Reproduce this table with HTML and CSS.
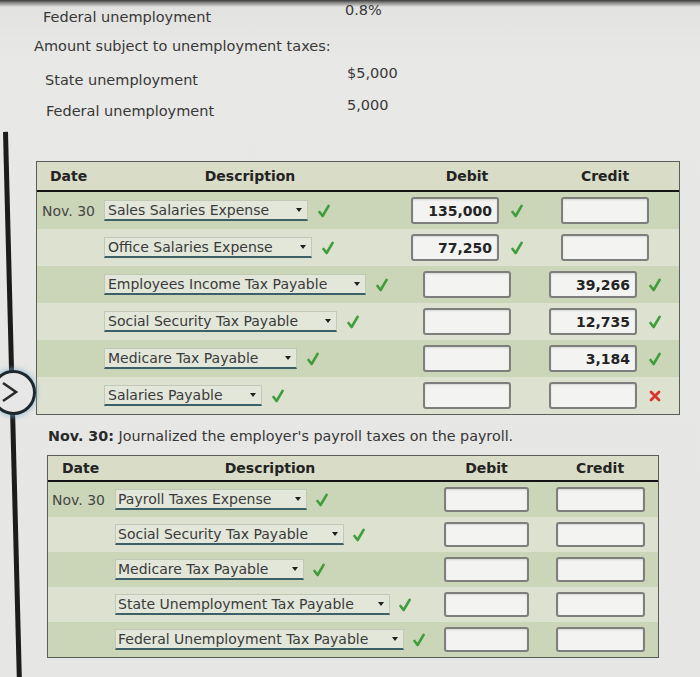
FILE: index.html
```html
<!DOCTYPE html>
<html>
<head>
<meta charset="utf-8">
<title>Payroll journal</title>
<link rel="stylesheet" href="styles.css">
</head>
<body>
<div class="edge"></div>
<div class="nav-circle"></div>
<svg class="nav-chevron" width="18" height="22" viewBox="0 0 18 22"><polyline points="2,2 15,11 2,20" fill="none" stroke="#2b2b2b" stroke-width="2.6" stroke-linejoin="miter"/></svg>

<main class="page">
  <section class="rates">
    <div class="rate-row r1"><span class="label">Federal unemployment</span><span class="val">0.8%</span></div>
    <div class="rate-row r2"><span class="head">Amount subject to unemployment taxes:</span></div>
    <div class="rate-row r3"><span class="label">State unemployment</span><span class="val">$5,000</span></div>
    <div class="rate-row r4"><span class="label">Federal unemployment</span><span class="val">5,000</span></div>
  </section>

  <div class="journal j1">
    <div class="jhead">
      <span class="h-date">Date</span><span class="h-c">Description</span><span class="h-c">Debit</span><span class="h-c">Credit</span>
    </div>
    <div class="jrow dark">
      <span class="date">Nov. 30</span>
      <span class="desc"><span class="sel">Sales Salaries Expense<i class="caret"></i></span><svg class="ok" viewBox="0 0 12 14"><path d="M1.5 8 L4.6 12 L10.6 1.8"/></svg></span>
      <span class="amt"><span class="inp">135,000</span><svg class="ok" viewBox="0 0 12 14"><path d="M1.5 8 L4.6 12 L10.6 1.8"/></svg></span>
      <span class="amt"><span class="inp"></span></span>
    </div>
    <div class="jrow light">
      <span class="date"></span>
      <span class="desc"><span class="sel">Office Salaries Expense<i class="caret"></i></span><svg class="ok" viewBox="0 0 12 14"><path d="M1.5 8 L4.6 12 L10.6 1.8"/></svg></span>
      <span class="amt"><span class="inp">77,250</span><svg class="ok" viewBox="0 0 12 14"><path d="M1.5 8 L4.6 12 L10.6 1.8"/></svg></span>
      <span class="amt"><span class="inp"></span></span>
    </div>
    <div class="jrow dark">
      <span class="date"></span>
      <span class="desc"><span class="sel">Employees Income Tax Payable<i class="caret"></i></span><svg class="ok" viewBox="0 0 12 14"><path d="M1.5 8 L4.6 12 L10.6 1.8"/></svg></span>
      <span class="amt"><span class="inp"></span></span>
      <span class="amt"><span class="inp">39,266</span><svg class="ok" viewBox="0 0 12 14"><path d="M1.5 8 L4.6 12 L10.6 1.8"/></svg></span>
    </div>
    <div class="jrow light">
      <span class="date"></span>
      <span class="desc"><span class="sel">Social Security Tax Payable<i class="caret"></i></span><svg class="ok" viewBox="0 0 12 14"><path d="M1.5 8 L4.6 12 L10.6 1.8"/></svg></span>
      <span class="amt"><span class="inp"></span></span>
      <span class="amt"><span class="inp">12,735</span><svg class="ok" viewBox="0 0 12 14"><path d="M1.5 8 L4.6 12 L10.6 1.8"/></svg></span>
    </div>
    <div class="jrow dark">
      <span class="date"></span>
      <span class="desc"><span class="sel">Medicare Tax Payable<i class="caret"></i></span><svg class="ok" viewBox="0 0 12 14"><path d="M1.5 8 L4.6 12 L10.6 1.8"/></svg></span>
      <span class="amt"><span class="inp"></span></span>
      <span class="amt"><span class="inp">3,184</span><svg class="ok" viewBox="0 0 12 14"><path d="M1.5 8 L4.6 12 L10.6 1.8"/></svg></span>
    </div>
    <div class="jrow light">
      <span class="date"></span>
      <span class="desc"><span class="sel">Salaries Payable<i class="caret"></i></span><svg class="ok" viewBox="0 0 12 14"><path d="M1.5 8 L4.6 12 L10.6 1.8"/></svg></span>
      <span class="amt"><span class="inp"></span></span>
      <span class="amt"><span class="inp"></span><svg class="bad" viewBox="0 0 12 12"><path d="M2 2 L10 10 M10 2 L2 10"/></svg></span>
    </div>
  </div>

  <p class="caption"><b>Nov. 30:</b> Journalized the employer's payroll taxes on the payroll.</p>

  <div class="journal j2">
    <div class="jhead">
      <span class="h-date">Date</span><span class="h-c">Description</span><span class="h-c">Debit</span><span class="h-c">Credit</span>
    </div>
    <div class="jrow dark">
      <span class="date">Nov. 30</span>
      <span class="desc"><span class="sel">Payroll Taxes Expense<i class="caret"></i></span><svg class="ok" viewBox="0 0 12 14"><path d="M1.5 8 L4.6 12 L10.6 1.8"/></svg></span>
      <span class="amt"><span class="inp"></span></span>
      <span class="amt"><span class="inp"></span></span>
    </div>
    <div class="jrow light">
      <span class="date"></span>
      <span class="desc"><span class="sel">Social Security Tax Payable<i class="caret"></i></span><svg class="ok" viewBox="0 0 12 14"><path d="M1.5 8 L4.6 12 L10.6 1.8"/></svg></span>
      <span class="amt"><span class="inp"></span></span>
      <span class="amt"><span class="inp"></span></span>
    </div>
    <div class="jrow dark">
      <span class="date"></span>
      <span class="desc"><span class="sel">Medicare Tax Payable<i class="caret"></i></span><svg class="ok" viewBox="0 0 12 14"><path d="M1.5 8 L4.6 12 L10.6 1.8"/></svg></span>
      <span class="amt"><span class="inp"></span></span>
      <span class="amt"><span class="inp"></span></span>
    </div>
    <div class="jrow light">
      <span class="date"></span>
      <span class="desc"><span class="sel">State Unemployment Tax Payable<i class="caret"></i></span><svg class="ok" viewBox="0 0 12 14"><path d="M1.5 8 L4.6 12 L10.6 1.8"/></svg></span>
      <span class="amt"><span class="inp"></span></span>
      <span class="amt"><span class="inp"></span></span>
    </div>
    <div class="jrow dark">
      <span class="date"></span>
      <span class="desc"><span class="sel">Federal Unemployment Tax Payable<i class="caret"></i></span><svg class="ok" viewBox="0 0 12 14"><path d="M1.5 8 L4.6 12 L10.6 1.8"/></svg></span>
      <span class="amt"><span class="inp"></span></span>
      <span class="amt"><span class="inp"></span></span>
    </div>
  </div>
</main>
</body>
</html>
```

FILE: styles.css
```css
* { box-sizing: border-box; }
html, body { margin: 0; }
body {
  width: 700px;
  height: 677px;
  overflow: hidden;
  position: relative;
  background: linear-gradient(to bottom, #3a3a3a 0, #8c8c8a 3px, #e2e2e0 7px, #e8e8e6 60px, #e6e6e4 100%);
  font-family: "DejaVu Sans", Verdana, sans-serif;
  font-size: 14px;
  color: #383838;
}

/* photo artefacts: screen edge + nav button */
.edge {
  position: absolute;
  left: 3px;
  top: 132px;
  width: 5px;
  height: 560px;
  background: #1c1c1c;
  transform-origin: top left;
  transform: rotate(-1.45deg);
}
.nav-circle {
  position: absolute;
  left: -9px;
  top: 370px;
  width: 45px;
  height: 45px;
  border-radius: 50%;
  border: 3px solid #1d272c;
  background: #e6e7e6;
  box-shadow: 0 0 4px 2px rgba(130, 175, 205, 0.55);
}
.nav-chevron {
  position: absolute;
  left: 1px;
  top: 381px;
}

.page { padding-top: 1px; }

/* rates block */
.rates { padding-left: 34px; font-size: 14.5px; }
.rate-row {
  display: grid;
  grid-template-columns: 311px auto;
  line-height: 18px;
  align-items: start;
}
.rate-row .label { padding-top: 7px; }
.r1 .label { padding-left: 9px; }
.r2 { margin-top: 11px; }
.r3 { margin-top: 9px; }
.r3 .label { padding-left: 11px; }
.r3 .val, .r4 .val { padding-left: 2px; }
.r4 { margin-top: 7px; }
.r4 .label { padding-left: 12px; padding-top: 6px; }

/* journal tables */
.journal {
  border: 1px solid #5b5e57;
  background: #d4dcc4;
}
.j1 { width: 644px; margin: 41px 0 0 36px; }
.j2 { width: 612px; margin: 10px 0 0 47px; }

.jhead, .jrow {
  display: grid;
  align-items: center;
}
.j1 .jhead, .j1 .jrow { grid-template-columns: 65px 296px 138px 138px; }
.j2 .jhead, .j2 .jrow { grid-template-columns: 62px 320px 113px 114px; }

.jhead {
  background: #d9dcc6;
  border-bottom: 2px solid #141414;
  font-weight: bold;
  color: #232323;
}
.j1 .jhead { height: 30px; }
.j2 .jhead { height: 26px; }
.j1 .h-date { padding-left: 13px; }
.j2 .h-date { padding-left: 14px; }
.h-c { text-align: center; }

.j1 .jrow { height: 37px; }
.j2 .jrow { height: 35px; }
.jrow.dark { background: #cbd6b8; }
.jrow.light { background: #dce2cf; }

.date { color: #454545; white-space: nowrap; }
.j1 .date { padding-left: 5px; }
.j2 .date { padding-left: 4px; }

.desc {
  display: flex;
  align-items: center;
  gap: 10px;
}
.j1 .desc { padding-left: 2px; }
.j2 .desc { padding-left: 5px; gap: 9px; }

.sel {
  display: inline-flex;
  align-items: center;
  height: 21px;
  padding: 0 5px 0 3px;
  background: #e2e7da;
  border: 1px solid #c2c8b7;
  border-bottom: 2px solid #3d5f66;
  color: #3a3a3a;
  white-space: nowrap;
}
.j2 .sel { padding-left: 2px; }
.caret {
  display: inline-block;
  margin-left: 27px;
  width: 0;
  height: 0;
  border-left: 3.5px solid transparent;
  border-right: 3.5px solid transparent;
  border-top: 4.5px solid #1f1f1f;
}
.j2 .caret { margin-left: 24px; }

.ok {
  width: 12px;
  height: 14px;
  flex: none;
}
.ok path {
  fill: none;
  stroke: #3f9d3c;
  stroke-width: 2.6;
  stroke-linecap: round;
  stroke-linejoin: round;
}
.bad {
  width: 12px;
  height: 12px;
  flex: none;
}
.bad path {
  fill: none;
  stroke: #d9352e;
  stroke-width: 2.8;
  stroke-linecap: round;
}

.amt {
  display: flex;
  justify-content: center;
  align-items: center;
  gap: 12px;
}
.inp {
  display: flex;
  align-items: center;
  justify-content: flex-end;
  width: 88px;
  height: 27px;
  padding-right: 5px;
  background: #f3f3f1;
  border: 2px solid #7e7e7c;
  border-radius: 3px;
  box-shadow: inset 0 1px 2px rgba(0, 0, 0, 0.12);
  font-weight: bold;
  color: #242424;
}
.j2 .inp { height: 25px; width: 85px; }
.j2 .amt:last-child .inp { width: 89px; }

.caption {
  margin: 12px 0 0 48px;
  line-height: 18px;
  font-size: 14.3px;
  color: #363636;
}
.caption b { color: #2a2a2a; }
```
